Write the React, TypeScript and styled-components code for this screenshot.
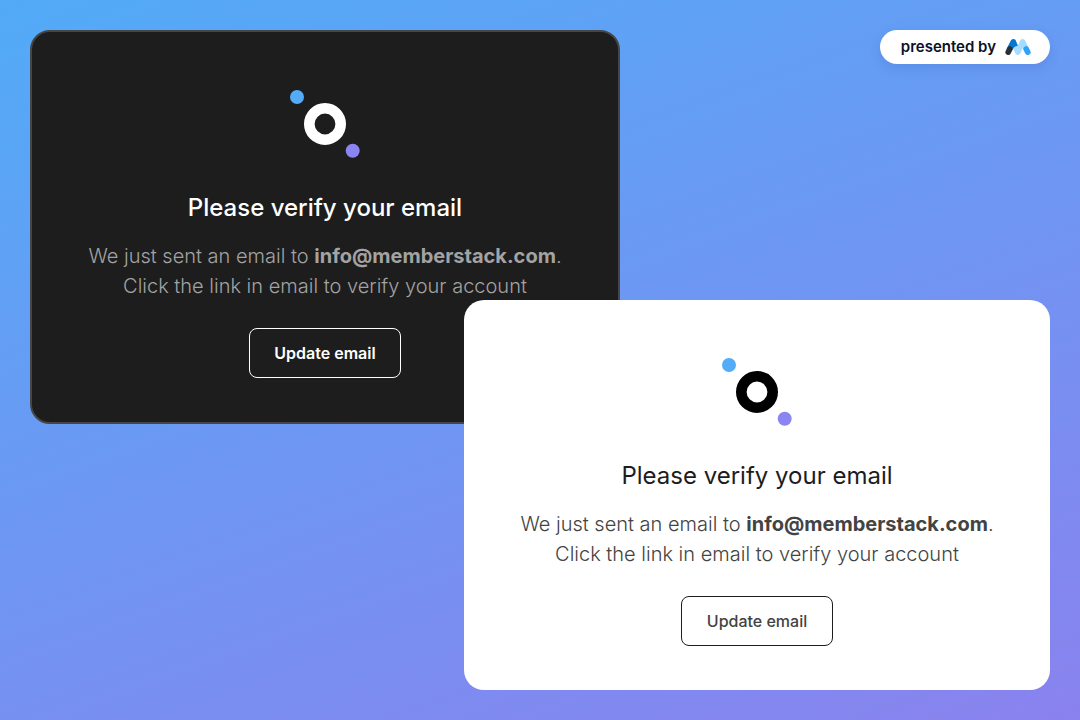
import React from "react";
import styled, { createGlobalStyle, css, ThemeProvider } from "styled-components";

interface CardTheme {
  surface: string;
  border: string;
  title: string;
  titleWeight: number;
  body: string;
  ring: string;
  buttonBorder: string;
  buttonText: string;
  buttonWeight: number;
}

const dark: CardTheme = {
  surface: "#1d1d1d",
  border: "2px solid #464646",
  title: "#ffffff",
  titleWeight: 500,
  body: "#a3a3a3",
  ring: "#ffffff",
  buttonBorder: "#ffffff",
  buttonText: "#ffffff",
  buttonWeight: 600,
};

const light: CardTheme = {
  surface: "#ffffff",
  border: "0",
  title: "#1d1d1d",
  titleWeight: 400,
  body: "#434343",
  ring: "#000000",
  buttonBorder: "#1d1d1d",
  buttonText: "#434343",
  buttonWeight: 500,
};

const GlobalStyle = createGlobalStyle`
  *, *::before, *::after {
    box-sizing: border-box;
  }
  body {
    margin: 0;
    font-family: Inter, "Liberation Sans", sans-serif;
  }
`;

const Page = styled.main`
  display: flex;
  flex-direction: column;
  min-height: 100vh;
  padding: 30px;
  background: linear-gradient(160deg, #52abf7, #8a82ee);
`;

const TopRow = styled.div`
  display: flex;
  justify-content: space-between;
  align-items: flex-start;
  gap: 24px;
`;

const Badge = styled.a`
  display: flex;
  align-items: center;
  gap: 9px;
  height: 34px;
  padding: 0 19px 0 21px;
  border-radius: 17px;
  background: #ffffff;
  box-shadow: 0 4px 12px rgba(40, 60, 160, 0.16);
  color: #0a1128;
  font-size: 15px;
  font-weight: 600;
  line-height: 20px;
  text-decoration: none;
  white-space: nowrap;
`;

const Card = styled.section<{ $overlap?: boolean }>`
  display: flex;
  flex-direction: column;
  align-items: center;
  box-sizing: content-box;
  width: 586px;
  padding: 58px 0 44px;
  border: ${({ theme }) => theme.border};
  border-radius: 20px;
  background: ${({ theme }) => theme.surface};
  text-align: center;
  ${({ $overlap }) =>
    $overlap &&
    css`
      position: relative;
      align-self: flex-end;
      margin-top: -124px;
    `}
`;

const Title = styled.h2`
  margin: 34px 0 17px;
  color: ${({ theme }) => theme.title};
  font-size: 24px;
  font-weight: ${({ theme }) => theme.titleWeight};
  line-height: 32px;
`;

const Message = styled.p`
  margin: 0 0 27px;
  color: ${({ theme }) => theme.body};
  font-size: 20px;
  font-weight: 300;
  line-height: 30px;
`;

const Address = styled.strong`
  font-weight: 700;
`;

const Button = styled.button`
  width: 152px;
  height: 50px;
  padding: 0;
  border: 1px solid ${({ theme }) => theme.buttonBorder};
  border-radius: 8px;
  background: transparent;
  color: ${({ theme }) => theme.buttonText};
  font-family: inherit;
  font-size: 16px;
  font-weight: ${({ theme }) => theme.buttonWeight};
  line-height: 24px;
  cursor: pointer;
`;

function OrbitLogo({ ring }: { ring: string }) {
  return (
    <svg width="70" height="68" viewBox="0 0 70 68" aria-hidden="true">
      <circle cx="35" cy="34" r="15.7" fill="none" stroke={ring} strokeWidth="10.6" />
      <circle cx="7" cy="7" r="7" fill="#54abf7" />
      <circle cx="62.7" cy="60.8" r="7" fill="#8a85f2" />
    </svg>
  );
}

function MemberstackLogo() {
  return (
    <svg
      width="26"
      height="18"
      viewBox="0 0 26 18"
      fill="none"
      strokeWidth="5.6"
      strokeLinecap="round"
      strokeLinejoin="round"
      aria-hidden="true"
    >
      <path d="M4.6 11 8.3 3.8 10 8" stroke="#0078d0" />
      <path d="M3.2 14.2 4.8 11" stroke="#2d2f36" />
      <path d="M11.4 11 12.8 14.2 17.6 3.8 21.2 11" stroke="#a6dcff" />
      <path d="M21.2 11 22.8 14.2" stroke="#2ea3fc" />
    </svg>
  );
}

function VerifyCard({ theme, overlap }: { theme: CardTheme; overlap?: boolean }) {
  return (
    <ThemeProvider theme={theme}>
      <Card $overlap={overlap}>
        <OrbitLogo ring={theme.ring} />
        <Title>Please verify your email</Title>
        <Message>
          We just sent an email to <Address>info@memberstack.com</Address>.
          <br />
          Click the link in email to verify your account
        </Message>
        <Button type="button">Update email</Button>
      </Card>
    </ThemeProvider>
  );
}

export default function App() {
  return (
    <>
      <GlobalStyle />
      <Page>
        <TopRow>
          <VerifyCard theme={dark} />
          <Badge href="#">
            presented by
            <MemberstackLogo />
          </Badge>
        </TopRow>
        <VerifyCard theme={light} overlap />
      </Page>
    </>
  );
}
